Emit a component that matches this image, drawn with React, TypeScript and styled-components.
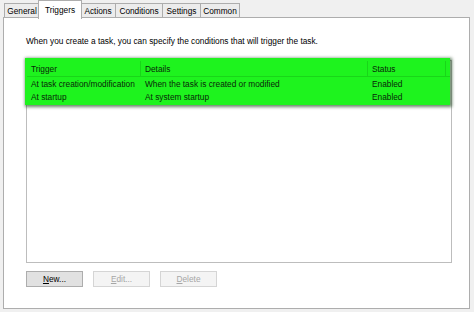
import styled, { createGlobalStyle } from 'styled-components'

const GlobalStyle = createGlobalStyle`
    html, body {
        margin: 0;
        padding: 0;
        background: #f0f0f0;
    }
    body {
        font-family: "Liberation Sans", Arial, sans-serif;
        font-size: 8.3px;
        color: #000;
    }
`

const Window = styled.div`
    width: 474px;
    height: 312px;
    box-sizing: border-box;
    padding: 0 4px 3px 3px;
    display: flex;
    flex-direction: column;
`

const TabStrip = styled.div`
    display: flex;
    align-items: flex-end;
    height: 18px;
    padding-left: 1px;
    position: relative;
    z-index: 1;
`

const Tab = styled.div<{ $active?: boolean; $w: number }>`
    box-sizing: border-box;
    width: ${p => p.$w}px;
    height: ${p => (p.$active ? 19 : 15)}px;
    margin-bottom: ${p => (p.$active ? -1 : 0)}px;
    margin-left: ${p => (p.$active ? -2 : -1)}px;
    margin-right: ${p => (p.$active ? -1 : 0)}px;
    border: 1px solid #adadad;
    border-bottom: ${p => (p.$active ? 'none' : '1px solid #adadad')};
    background: ${p => (p.$active ? '#fff' : '#ececec')};
    display: flex;
    align-items: center;
    justify-content: center;
    padding-top: ${p => (p.$active ? 0 : 1)}px;
    position: relative;
    z-index: ${p => (p.$active ? 2 : 0)};
    &:first-child {
        margin-left: 0;
    }
`

const Panel = styled.div`
    flex: 1;
    background: #fff;
    border: 1px solid #adadad;
    margin-top: -1px;
    padding: 18px 16px 0 22px;
    display: flex;
    flex-direction: column;
`

const Intro = styled.p`
    margin: 0 0 14px 0;
    line-height: 10px;
`

const ListBox = styled.div`
    width: 426px;
    height: 203px;
    box-sizing: border-box;
    border: 1px solid #bdbdbd;
`

const Highlight = styled.div`
    background: #1ef31e;
    margin: -3px 1px 0 -2px;
    padding: 3px 0 2px 2px;
    box-shadow: 1px 1px 3px 1px rgba(0, 50, 0, 0.6);
`

const Row = styled.div<{ $head?: boolean }>`
    display: grid;
    grid-template-columns: 114px 227px 78px;
    height: ${p => (p.$head ? 15 : 13)}px;
    align-items: center;
    border-bottom: ${p => (p.$head ? '1px solid #19d619' : 'none')};
`

const Cell = styled.div<{ $head?: boolean }>`
    padding-left: 4px;
    white-space: nowrap;
    overflow: hidden;
    height: 100%;
    display: flex;
    align-items: center;
    border-right: ${p => (p.$head ? '1px solid #19d619' : 'none')};
    color: #082808;
`

const Buttons = styled.div`
    display: flex;
    gap: 10px;
    margin-top: 8px;
`

const Button = styled.button<{ $enabled?: boolean }>`
    width: 57px;
    height: 16px;
    box-sizing: border-box;
    padding: 0;
    font: inherit;
    border: 1px solid ${p => (p.$enabled ? '#adadad' : '#d5d5d5')};
    background: ${p => (p.$enabled ? '#e1e1e1' : '#f4f4f4')};
    color: ${p => (p.$enabled ? '#000' : '#a6a6a6')};
    display: flex;
    align-items: center;
    justify-content: center;
`

const tabs = [
    { label: 'General', w: 36 },
    { label: 'Triggers', w: 44, active: true },
    { label: 'Actions', w: 36 },
    { label: 'Conditions', w: 48 },
    { label: 'Settings', w: 39 },
    { label: 'Common', w: 40 },
]

const rows = [
    ['At task creation/modification', 'When the task is created or modified', 'Enabled'],
    ['At startup', 'At system startup', 'Enabled'],
]

export default function App() {
    return (
        <>
            <GlobalStyle />
            <Window>
                <TabStrip>
                    {tabs.map(t => (
                        <Tab key={t.label} $w={t.w} $active={t.active}>{t.label}</Tab>
                    ))}
                </TabStrip>
                <Panel>
                    <Intro>When you create a task, you can specify the conditions that will trigger the task.</Intro>
                    <ListBox>
                        <Highlight>
                            <Row $head>
                                <Cell $head>Trigger</Cell>
                                <Cell $head>Details</Cell>
                                <Cell $head>Status</Cell>
                            </Row>
                            {rows.map(r => (
                                <Row key={r[0]}>
                                    {r.map(c => <Cell key={c}>{c}</Cell>)}
                                </Row>
                            ))}
                        </Highlight>
                    </ListBox>
                    <Buttons>
                        <Button $enabled><span><u>N</u>ew...</span></Button>
                        <Button disabled><span><u>E</u>dit...</span></Button>
                        <Button disabled><span><u>D</u>elete</span></Button>
                    </Buttons>
                </Panel>
            </Window>
        </>
    )
}
